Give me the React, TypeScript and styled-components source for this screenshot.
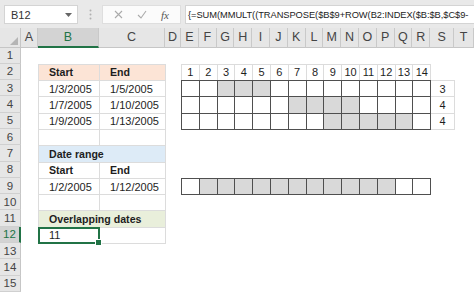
import React from 'react';
import styled, { createGlobalStyle, css } from 'styled-components';

const GlobalStyle = createGlobalStyle`
  html, body {
    margin: 0;
    padding: 0;
    background: #fff;
  }
  body {
    font-family: 'Liberation Sans', Arial, sans-serif;
  }
`;

const Window = styled.div`
  width: 474px;
  height: 292px;
  overflow: hidden;
  display: flex;
  flex-direction: column;
  background: #fff;
`;

// formula bar across the top
const FormulaBar = styled.div`
  height: 28px;
  flex: none;
  box-sizing: border-box;
  display: flex;
  align-items: stretch;
  padding: 5px 0 4px 4px;
  background: #e9e9e9;
`;

const NameBox = styled.div`
  width: 74px;
  box-sizing: border-box;
  display: flex;
  align-items: center;
  justify-content: space-between;
  padding: 0 5px 0 6px;
  background: #fff;
  border: 1px solid #d4d4d4;
  font-size: 11px;
  color: #333;
`;

const Grip = styled.div`
  width: 24px;
  display: flex;
  align-items: center;
  justify-content: center;
`;

const ActionBox = styled.div`
  width: 79px;
  box-sizing: border-box;
  display: flex;
  align-items: center;
  justify-content: space-around;
  padding: 0 4px;
  background: #fbfbfb;
  border: 1px solid #dedede;
`;

const Fx = styled.span`
  font-family: 'Liberation Serif', serif;
  font-style: italic;
  font-size: 11px;
  color: #555;
`;

const FormulaInput = styled.div`
  flex: 1;
  margin-left: 4px;
  display: flex;
  align-items: center;
  padding-left: 2px;
  background: #fff;
  border: 1px solid #d4d4d4;
  border-right: none;
  font-size: 9.3px;
  letter-spacing: -0.05px;
  color: #222;
  white-space: nowrap;
  overflow: hidden;
`;

// the worksheet itself
const Sheet = styled.div`
  flex: 1;
  display: grid;
  grid-template-columns: 21px 17px 61px 66px 16px repeat(14, 17.8px) 24px 1fr;
  grid-template-rows: 19.5px repeat(15, 16.3px);
`;

const Corner = styled.div`
  background: #e6e6e6;
  border-right: 1px solid #c6c6c6;
  border-bottom: 1px solid #c6c6c6;
  display: flex;
  align-items: flex-end;
  justify-content: flex-end;
  padding: 0 2px 2px 0;
`;

const ColHead = styled.div<{ $active?: boolean }>`
  box-sizing: border-box;
  display: flex;
  align-items: center;
  justify-content: center;
  font-size: 12.5px;
  color: ${p => (p.$active ? '#217346' : '#444')};
  background: ${p => (p.$active ? '#d3d3d3' : '#e6e6e6')};
  border-right: 1px solid #c9c9c9;
  border-bottom: ${p => (p.$active ? '2px solid #217346' : '1px solid #c6c6c6')};
`;

const RowHead = styled.div<{ $active?: boolean }>`
  box-sizing: border-box;
  display: flex;
  align-items: center;
  justify-content: center;
  font-size: 11.5px;
  color: ${p => (p.$active ? '#217346' : '#444')};
  background: ${p => (p.$active ? '#d3d3d3' : '#e6e6e6')};
  border-bottom: 1px solid #d0d0d0;
  border-right: ${p => (p.$active ? '2px solid #217346' : '1px solid #c6c6c6')};
`;

type Edge = 'none' | 'light' | 'dark';

const Cell = styled.div<{
  $bg?: string;
  $edge?: Edge;
  $bold?: boolean;
  $center?: boolean;
  $span?: number;
}>`
  box-sizing: border-box;
  display: flex;
  align-items: center;
  justify-content: ${p => (p.$center ? 'center' : 'flex-start')};
  padding-left: ${p => (p.$center ? '0' : '10px')};
  font-size: ${p => (p.$bold ? '10.6px' : '11px')};
  font-weight: ${p => (p.$bold ? 700 : 400)};
  color: #1e1e1e;
  background: ${p => p.$bg ?? 'transparent'};
  white-space: nowrap;
  ${p => p.$span && css`grid-column: span ${p.$span};`}
  ${p =>
    p.$edge &&
    p.$edge !== 'none' &&
    css`
      border: 1px solid ${p.$edge === 'dark' ? '#4f4f4f' : '#dcdcdc'};
      margin: 0 -1px -1px 0;
      position: relative;
      z-index: ${p.$edge === 'dark' ? 2 : 1};
    `}
`;

const ActiveCell = styled(Cell)`
  border: 2px solid #217346;
  margin: 0 -1px -1px 0;
  padding-left: 9px;
  position: relative;
  z-index: 3;

  &::after {
    content: '';
    position: absolute;
    right: -4px;
    bottom: -4px;
    width: 5px;
    height: 5px;
    background: #217346;
    border: 1px solid #fff;
  }
`;

const LETTERS = ['A', 'B', 'C', 'D', ...'EFGHIJKLMNOPQR'.split(''), 'S', 'T'];
const ROWS = Array.from({ length: 15 }, (_, i) => i + 1);
const DAYS = Array.from({ length: 14 }, (_, i) => i + 1);

const PEACH = '#fce4d6';
const BLUE = '#ddebf7';
const GREEN = '#e9efdb';
const SHADE = '#d9d9d9';

const bars: Record<number, [number, number]> = {
  3: [3, 5],
  4: [7, 10],
  5: [9, 13],
  9: [2, 12],
};

const counts: Record<number, string> = { 3: '3', 4: '4', 5: '4' };

const dates: Record<number, [string, string]> = {
  3: ['1/3/2005', '1/5/2005'],
  4: ['1/7/2005', '1/10/2005'],
  5: ['1/9/2005', '1/13/2005'],
  9: ['1/2/2005', '1/12/2005'],
};

function tableCells(r: number) {
  if (r === 2)
    return [
      <Cell key="b" $edge="light" $bg={PEACH} $bold>Start</Cell>,
      <Cell key="c" $edge="light" $bg={PEACH} $bold>End</Cell>,
    ];
  if (r === 8)
    return [
      <Cell key="b" $edge="light" $bold>Start</Cell>,
      <Cell key="c" $edge="light" $bold>End</Cell>,
    ];
  if (dates[r])
    return [
      <Cell key="b" $edge="light">{dates[r][0]}</Cell>,
      <Cell key="c" $edge="light">{dates[r][1]}</Cell>,
    ];
  if (r === 6 || r === 10)
    return [<Cell key="b" $edge="light" />, <Cell key="c" $edge="light" />];
  if (r === 7)
    return [<Cell key="bc" $edge="light" $bg={BLUE} $bold $span={2}>Date range</Cell>];
  if (r === 11)
    return [<Cell key="bc" $edge="light" $bg={GREEN} $bold $span={2}>Overlapping dates</Cell>];
  if (r === 12)
    return [<ActiveCell key="b">11</ActiveCell>, <Cell key="c" $edge="light" />];
  return [<Cell key="b" />, <Cell key="c" />];
}

function dayCells(r: number) {
  if (r === 2)
    return DAYS.map(d => (
      <Cell key={d} $edge="light" $center>{d}</Cell>
    ));
  const bar = bars[r];
  if (bar)
    return DAYS.map(d => (
      <Cell key={d} $edge="dark" $bg={d >= bar[0] && d <= bar[1] ? SHADE : '#fff'} />
    ));
  return DAYS.map(d => <Cell key={d} />);
}

function App() {
  return (
    <Window>
      <GlobalStyle />
      <FormulaBar>
        <NameBox>
          B12
          <svg width="7" height="4" viewBox="0 0 7 4">
            <path d="M0 0h7L3.5 4z" fill="#666" />
          </svg>
        </NameBox>
        <Grip>
          <svg width="3" height="11" viewBox="0 0 3 11">
            <circle cx="1.5" cy="1.5" r="1" fill="#b0b0b0" />
            <circle cx="1.5" cy="5.5" r="1" fill="#b0b0b0" />
            <circle cx="1.5" cy="9.5" r="1" fill="#b0b0b0" />
          </svg>
        </Grip>
        <ActionBox>
          <svg width="9" height="9" viewBox="0 0 9 9">
            <path d="M1 1l7 7M8 1l-7 7" stroke="#aaa" strokeWidth="1.1" />
          </svg>
          <svg width="10" height="9" viewBox="0 0 10 9">
            <path d="M1 5l3 3 5-7" stroke="#aaa" strokeWidth="1.1" fill="none" />
          </svg>
          <Fx>fx</Fx>
        </ActionBox>
        <FormulaInput>{'{=SUM(MMULT((TRANSPOSE($B$9+ROW(B2:INDEX($B:$B,$C$9-'}</FormulaInput>
      </FormulaBar>
      <Sheet>
        <Corner>
          <svg width="8" height="8" viewBox="0 0 8 8">
            <path d="M8 0v8H0z" fill="#b5b5b5" />
          </svg>
        </Corner>
        {LETTERS.map(l => (
          <ColHead key={l} $active={l === 'B'}>{l}</ColHead>
        ))}
        {ROWS.map(r => (
          <React.Fragment key={r}>
            <RowHead $active={r === 12}>{r}</RowHead>
            <Cell />
            {tableCells(r)}
            <Cell />
            {dayCells(r)}
            {counts[r] ? <Cell $edge="light" $center>{counts[r]}</Cell> : <Cell />}
            <Cell />
          </React.Fragment>
        ))}
      </Sheet>
    </Window>
  );
}

export default App;
